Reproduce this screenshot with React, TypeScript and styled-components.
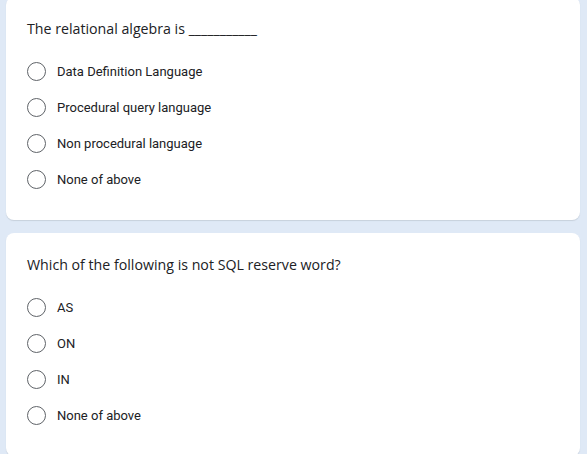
import React from "react";
import styled, { createGlobalStyle } from "styled-components";

const GlobalStyle = createGlobalStyle`
  html, body {
    margin: 0;
    padding: 0;
    background: #dfe9f6;
    overflow: hidden;
  }
`;

interface Question {
  title: string;
  options: string[];
}

const questions: Question[] = [
  {
    title: "The relational algebra is ___________",
    options: [
      "Data Definition Language",
      "Procedural query language",
      "Non procedural language",
      "None of above",
    ],
  },
  {
    title: "Which of the following is not SQL reserve word?",
    options: ["AS", "ON", "IN", "None of above"],
  },
];

const App = () => {
  return (
    <>
      <GlobalStyle />
      <Page>
        {questions.map((q) => (
          <Card key={q.title}>
            <Title>{q.title}</Title>
            <Options>
              {q.options.map((opt) => (
                <Option key={opt}>
                  <Radio />
                  <Label>{opt}</Label>
                </Option>
              ))}
            </Options>
          </Card>
        ))}
      </Page>
    </>
  );
};

export default App;

const Page = styled.div`
  display: flex;
  flex-direction: column;
  gap: 13px;
  padding: 0 7px 0 6px;
  margin-top: -3px;
`;

const Card = styled.div`
  background: #fff;
  border-radius: 8px;
  box-shadow: 0 1px 1px rgba(60, 64, 67, 0.15);
  padding: 22px 24px 23px 21px;
`;

const Title = styled.div`
  font-family: "Open Sans", "Liberation Sans", sans-serif;
  font-size: 14.2px;
  line-height: 20px;
  color: #202124;
  margin-bottom: 14px;
`;

const Options = styled.div`
  display: flex;
  flex-direction: column;
`;

const Option = styled.label`
  display: flex;
  align-items: center;
  gap: 11px;
  height: 36px;
`;

const Radio = styled.span`
  box-sizing: border-box;
  width: 19px;
  height: 19px;
  border: 1.5px solid #5f6368;
  border-radius: 50%;
  flex: none;
`;

const Label = styled.span`
  font-family: Roboto, "Liberation Sans", sans-serif;
  font-size: 13px;
  color: #202124;
`;
